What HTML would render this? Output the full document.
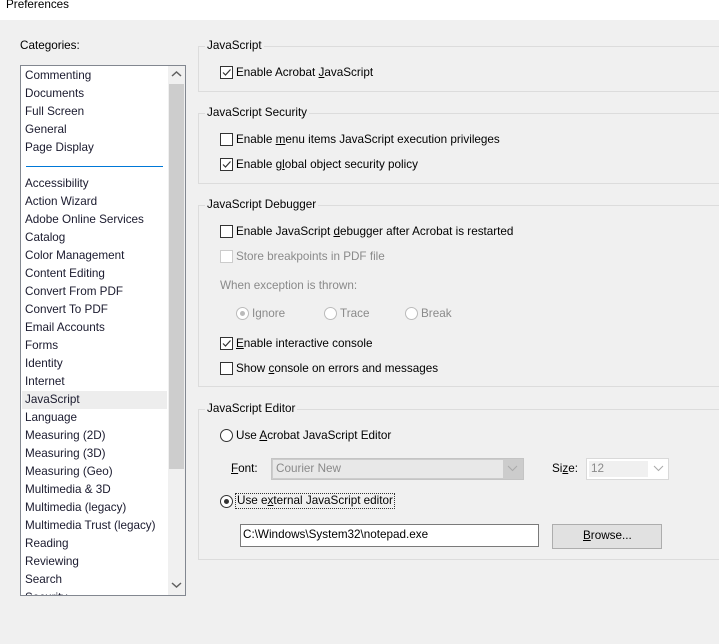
<!DOCTYPE html>
<html><head><meta charset="utf-8"><style>
*{margin:0;padding:0;box-sizing:border-box}
body{width:719px;height:644px;background:#f0f0f0;font-family:"Liberation Sans",sans-serif;font-size:11.7px;color:#000;position:relative;overflow:hidden}
.a{position:absolute;white-space:nowrap;line-height:16px}
.title{position:absolute;left:0;top:0;width:719px;height:20px;background:#fff}
.list{position:absolute;left:20px;top:65px;width:166px;height:531px;background:#fff;border:1px solid #828790;overflow:hidden}
.it{position:absolute;left:4px;line-height:18px;height:18px;color:#1a1a2e}
.grp{position:absolute;left:198px;width:530px;border:1px solid #dcdcdc}
.lbl{position:absolute;background:#f0f0f0;padding:0 2px;line-height:14px}
.cb{position:absolute;width:13px;height:13px;border:1px solid #333;background:#fff}
.cb.dis{border-color:#ccc}
.rd{position:absolute;width:13px;height:13px;border:1px solid #333;border-radius:50%;background:#fff}
.rd.dis{border-color:#bbb}
.g{color:#8a8a8a}
u{text-decoration:underline}
</style></head><body>
<div class="title"></div>
<div class="a" style="left:6px;top:-3px">Preferences</div>
<div class="a" style="left:20px;top:38px">Categories:</div>
<div class="list">
<div class="it" style="top:1px">Commenting</div>
<div class="it" style="top:19px">Documents</div>
<div class="it" style="top:37px">Full Screen</div>
<div class="it" style="top:55px">General</div>
<div class="it" style="top:73px">Page Display</div>
<div style="position:absolute;left:5px;top:100px;width:137px;height:1px;background:#0078d7"></div>
<div class="it" style="top:109px">Accessibility</div>
<div class="it" style="top:127px">Action Wizard</div>
<div class="it" style="top:145px">Adobe Online Services</div>
<div class="it" style="top:163px">Catalog</div>
<div class="it" style="top:181px">Color Management</div>
<div class="it" style="top:199px">Content Editing</div>
<div class="it" style="top:217px">Convert From PDF</div>
<div class="it" style="top:235px">Convert To PDF</div>
<div class="it" style="top:253px">Email Accounts</div>
<div class="it" style="top:271px">Forms</div>
<div class="it" style="top:289px">Identity</div>
<div class="it" style="top:307px">Internet</div>
<div style="position:absolute;left:1px;top:325px;width:145px;height:18px;background:#ededed"></div>
<div class="it" style="top:325px">JavaScript</div>
<div class="it" style="top:343px">Language</div>
<div class="it" style="top:361px">Measuring (2D)</div>
<div class="it" style="top:379px">Measuring (3D)</div>
<div class="it" style="top:397px">Measuring (Geo)</div>
<div class="it" style="top:415px">Multimedia &amp; 3D</div>
<div class="it" style="top:433px">Multimedia (legacy)</div>
<div class="it" style="top:451px">Multimedia Trust (legacy)</div>
<div class="it" style="top:469px">Reading</div>
<div class="it" style="top:487px">Reviewing</div>
<div class="it" style="top:505px">Search</div>
<div class="it" style="top:523px">Security</div>
<div style="position:absolute;left:147px;top:0;width:17px;height:529px;background:#f0f0f0"></div>
<div style="position:absolute;left:148px;top:18px;width:15px;height:385px;background:#cdcdcd"></div>
<svg style="position:absolute;left:150px;top:4px" width="11" height="8"><path d="M1 6L5.5 2L10 6" stroke="#606060" stroke-width="1.5" fill="none"/></svg>
<svg style="position:absolute;left:150px;top:515px" width="11" height="8"><path d="M1 2L5.5 6L10 2" stroke="#606060" stroke-width="1.5" fill="none"/></svg>
</div>

<div class="grp" style="top:46px;height:46px"></div>
<div class="lbl a" style="left:205px;top:39px">JavaScript</div>
<div class="cb" style="left:220px;top:66px"></div>
<svg style="position:absolute;left:221px;top:67px" width="11" height="11"><path d="M2 5.5L4.5 8L9.5 2.5" stroke="#333" stroke-width="1.2" fill="none"/></svg>
<div class="a" style="left:236px;top:65px">Enable Acrobat <u>J</u>avaScript</div>

<div class="grp" style="top:113px;height:71px"></div>
<div class="lbl a" style="left:205px;top:106px">JavaScript Security</div>
<div class="cb" style="left:220px;top:133px"></div>
<div class="a" style="left:236px;top:132px">Enable <u>m</u>enu items JavaScript execution privileges</div>
<div class="cb" style="left:220px;top:158px"></div>
<svg style="position:absolute;left:221px;top:159px" width="11" height="11"><path d="M2 5.5L4.5 8L9.5 2.5" stroke="#333" stroke-width="1.2" fill="none"/></svg>
<div class="a" style="left:236px;top:157px">Enable g<u>l</u>obal object security policy</div>

<div class="grp" style="top:205px;height:182px"></div>
<div class="lbl a" style="left:205px;top:198px">JavaScript Debugger</div>
<div class="cb" style="left:220px;top:225px"></div>
<div class="a" style="left:236px;top:224px">Enable JavaScript <u>d</u>ebugger after Acrobat is restarted</div>
<div class="cb dis" style="left:220px;top:250px"></div>
<div class="a g" style="left:236px;top:249px">Store breakpoints in PDF file</div>
<div class="a g" style="left:220px;top:278px">When exception is thrown:</div>
<div class="rd dis" style="left:236px;top:307px"></div>
<div style="position:absolute;left:240px;top:311px;width:5px;height:5px;border-radius:50%;background:#bbb"></div>
<div class="a g" style="left:252px;top:306px">Ignore</div>
<div class="rd dis" style="left:324px;top:307px"></div>
<div class="a g" style="left:340px;top:306px">Trace</div>
<div class="rd dis" style="left:405px;top:307px"></div>
<div class="a g" style="left:421px;top:306px">Break</div>
<div class="cb" style="left:220px;top:337px"></div>
<svg style="position:absolute;left:221px;top:338px" width="11" height="11"><path d="M2 5.5L4.5 8L9.5 2.5" stroke="#333" stroke-width="1.2" fill="none"/></svg>
<div class="a" style="left:236px;top:336px"><u>E</u>nable interactive console</div>
<div class="cb" style="left:220px;top:362px"></div>
<div class="a" style="left:236px;top:361px">Show <u>c</u>onsole on errors and messages</div>

<div class="grp" style="top:409px;height:151px"></div>
<div class="lbl a" style="left:205px;top:402px">JavaScript Editor</div>
<div class="rd" style="left:220px;top:429px"></div>
<div class="a" style="left:236px;top:428px">Use <u>A</u>crobat JavaScript Editor</div>
<div class="a" style="left:231px;top:461px"><u>F</u>ont:</div>
<div style="position:absolute;left:271px;top:458px;width:253px;height:22px;background:#cccccc;border:1px solid #c4c4c4"></div>
<div style="position:absolute;left:273px;top:460px;width:230px;height:18px;background:#e8e8e8"></div>
<div class="a g" style="left:276px;top:461px">Courier New</div>
<svg style="position:absolute;left:507px;top:465px" width="11" height="7"><path d="M1 1L5.5 5.5L10 1" stroke="#aaa" fill="none"/></svg>
<div class="a" style="left:552px;top:461px">Si<u>z</u>e:</div>
<div style="position:absolute;left:586px;top:458px;width:83px;height:22px;background:#fff;border:1px solid #d9d9d9"></div>
<div style="position:absolute;left:589px;top:461px;width:59px;height:16px;background:#f0f0f0"></div>
<div class="a g" style="left:591px;top:461px">12</div>
<svg style="position:absolute;left:653px;top:465px" width="11" height="7"><path d="M1 1L5.5 5.5L10 1" stroke="#aaa" fill="none"/></svg>
<div class="rd" style="left:220px;top:495px"></div>
<div style="position:absolute;left:224px;top:499px;width:5px;height:5px;border-radius:50%;background:#333"></div>
<div class="a" style="left:235px;top:493px;border:1px dotted #333;padding:0 1px;line-height:14px">Use e<u>x</u>ternal JavaScript editor</div>
<div style="position:absolute;left:240px;top:524px;width:299px;height:23px;background:#fff;border:1px solid #7a7a7a"></div>
<div class="a" style="left:243px;top:527px">C:\Windows\System32\notepad.exe</div>
<div style="position:absolute;left:552px;top:524px;width:110px;height:25px;background:#e1e1e1;border:1px solid #adadad"></div>
<div class="a" style="left:583px;top:528px"><u>B</u>rowse...</div>
</body></html>
